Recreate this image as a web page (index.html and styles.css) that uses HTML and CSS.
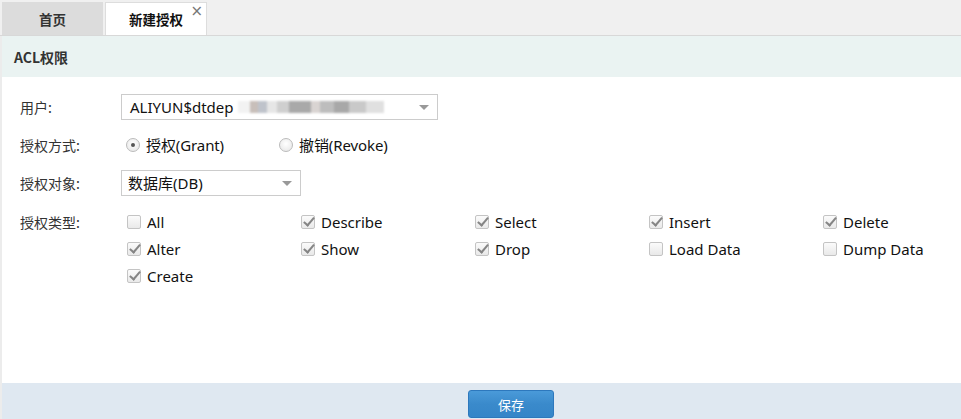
FILE: index.html
```html
<!DOCTYPE html>
<html lang="zh">
<head>
<meta charset="utf-8">
<link rel="stylesheet" href="styles.css">
</head>
<body>
<div class="app">
  <div class="tabbar">
    <div class="tab">首页</div>
    <div class="tab active">新建授权<span class="close">×</span></div>
  </div>
  <div class="panel-head">ACL权限</div>
  <div class="panel-body">
    <div class="row">
      <div class="label">用户:</div>
      <div class="select wide">
        <span class="value">ALIYUN$dtdep</span><span class="blur"></span>
        <span class="caret"></span>
      </div>
    </div>
    <div class="row">
      <div class="label">授权方式:</div>
      <label class="radio on"><span class="dot"></span>授权(Grant)</label>
      <label class="radio second"><span class="dot"></span>撤销(Revoke)</label>
    </div>
    <div class="row">
      <div class="label">授权对象:</div>
      <div class="select narrow">
        <span class="value">数据库(DB)</span>
        <span class="caret"></span>
      </div>
    </div>
    <div class="row types">
      <div class="label">授权类型:</div>
      <div class="checks">
        <label class="check"><span class="box"></span>All</label>
        <label class="check on"><span class="box"></span>Describe</label>
        <label class="check on"><span class="box"></span>Select</label>
        <label class="check on"><span class="box"></span>Insert</label>
        <label class="check on"><span class="box"></span>Delete</label>
        <label class="check on"><span class="box"></span>Alter</label>
        <label class="check on"><span class="box"></span>Show</label>
        <label class="check on"><span class="box"></span>Drop</label>
        <label class="check"><span class="box"></span>Load Data</label>
        <label class="check"><span class="box"></span>Dump Data</label>
        <label class="check on"><span class="box"></span>Create</label>
      </div>
    </div>
  </div>
  <div class="footer">
    <button class="save">保存</button>
  </div>
</div>
</body>
</html>
```
FILE: styles.css
```css
html, body { margin: 0; padding: 0; }
body {
  font-family: "Noto Sans", "Noto Sans CJK SC", sans-serif;
  color: #222;
  background: #ececec;
}
.app {
  width: 961px;
  height: 419px;
  padding-left: 2px;
  box-sizing: border-box;
  display: flex;
  flex-direction: column;
  background: #ececec;
}
.tabbar {
  height: 33px;
  padding-top: 2px;
  background: #f0f0f0;
  border-bottom: 1px solid #d8d8d8;
  display: flex;
  gap: 2px;
  margin-left: -2px;
  padding-left: 2px;
}
.tab {
  width: 101px;
  height: 33px;
  box-sizing: border-box;
  display: flex;
  align-items: center;
  justify-content: center;
  font-family: "Noto Sans CJK SC", sans-serif;
  font-size: 13.5px;
  font-weight: 700;
  color: #333;
  background: #dcdcdc;
  position: relative;
}
.tab.active {
  background: #fff;
  color: #111;
  border: 1px solid #dddddd;
  border-bottom: none;
  width: 102px;
  height: 33px;
  margin-bottom: -1px;
}
.close {
  position: absolute;
  right: 3px;
  top: -1px;
  font-family: "DejaVu Sans", sans-serif;
  font-size: 15px;
  font-weight: 400;
  color: #777;
}
.panel-head {
  height: 41px;
  background: #eaf3f2;
  display: flex;
  align-items: center;
  padding-left: 12px;
  font-family: "Noto Sans CJK SC", sans-serif;
  font-size: 14px;
  font-weight: 700;
  color: #333;
}
.panel-body {
  flex: 1;
  background: #fff;
  padding: 17px 0 0 18px;
  display: flex;
  flex-direction: column;
  gap: 13px;
}
.row {
  display: flex;
  align-items: center;
  height: 25px;
}
.label {
  width: 101px;
  flex-shrink: 0;
  font-family: "Noto Sans CJK SC", sans-serif;
  font-size: 14px;
  color: #333;
}
.select {
  height: 26px;
  box-sizing: border-box;
  border: 1px solid #cccccc;
  display: flex;
  align-items: center;
  padding-left: 8px;
  position: relative;
  font-size: 15px;
  color: #111;
}
.select.wide { width: 317px; }
.select.narrow { width: 180px; padding-left: 6px; }
.value { white-space: nowrap; }
.blur {
  display: inline-block;
  width: 146px;
  height: 12px;
  margin-left: 4px;
  background: linear-gradient(90deg, #f2f2f2 0 8%, #c8bfba 8% 14%, #bfc3cb 14% 20%, #e6e6e6 20% 27%, #cfcfcf 27% 35%, #a9a9a9 35% 50%, #d9d4d2 50% 56%, #bdbdbd 56% 66%, #a8a8a8 66% 76%, #c9c9c9 76% 88%, #e0e0e0 88% 100%);
  filter: blur(1px);
}
.caret {
  position: absolute;
  right: 8px;
  top: 10px;
  width: 0;
  height: 0;
  border-left: 5px solid transparent;
  border-right: 5px solid transparent;
  border-top: 5px solid #999;
}
.radio {
  display: flex;
  align-items: center;
  font-size: 15px;
  color: #111;
  margin-left: 5px;
  width: 153px;
  letter-spacing: -0.1px;
}
.radio.second { margin-left: 0; }
.radio .dot {
  width: 14px;
  height: 14px;
  box-sizing: border-box;
  border-radius: 50%;
  border: 1px solid #bbb;
  background: radial-gradient(circle at 50% 40%, #ffffff, #e4e4e4);
  margin-right: 6px;
  position: relative;
}
.radio.on .dot::after {
  content: "";
  position: absolute;
  left: 4px;
  top: 4px;
  width: 4px;
  height: 4px;
  border-radius: 50%;
  background: #555;
}
.row.types {
  align-items: flex-start;
  height: auto;
  margin-top: 4px;
}
.checks {
  margin-left: 6px;
  display: grid;
  grid-template-columns: repeat(4, 174px) 1fr;
  row-gap: 8px;
}
.check {
  display: flex;
  align-items: center;
  height: 19px;
  font-size: 15px;
  color: #111;
}
.check .box {
  width: 14px;
  height: 14px;
  box-sizing: border-box;
  border: 1px solid #c4c4c4;
  border-radius: 2px;
  background: linear-gradient(#fbfbfb, #e9e9e9);
  margin-right: 6px;
  position: relative;
}
.check.on .box::after {
  content: "";
  position: absolute;
  left: 4px;
  top: -1px;
  width: 4px;
  height: 9px;
  border-right: 2px solid #858585;
  border-bottom: 2px solid #858585;
  transform: rotate(40deg);
}
.footer {
  height: 36px;
  background: #dfe8f1;
  display: flex;
  justify-content: center;
  align-items: flex-start;
  padding-top: 7px;
  box-sizing: border-box;
}
.save {
  width: 86px;
  height: 28px;
  margin-left: 59px;
  border: 1px solid #2d78bd;
  border-radius: 3px;
  background: linear-gradient(#4a9ad9, #3a8acb 50%, #3585c8);
  color: #fff;
  font-family: "Noto Sans CJK SC", sans-serif;
  font-size: 13px;
  padding: 0;
}
```
